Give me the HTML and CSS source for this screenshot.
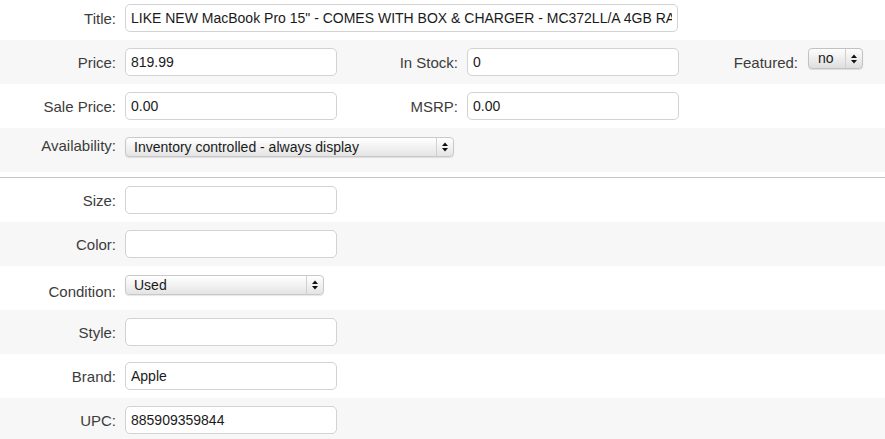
FILE: index.html
```html
<!DOCTYPE html>
<html lang="en">
<head>
<meta charset="UTF-8">
<title>Edit Product</title>
<link rel="stylesheet" href="styles.css">
</head>
<body>
	<form class="product-form">
		<div class="row">
			<label class="lbl">Title:</label>
			<input class="txt wide" type="text" value="LIKE NEW MacBook Pro 15&quot; - COMES WITH BOX &amp; CHARGER - MC372LL/A 4GB RAM 320GB HDD">
		</div>
		<div class="row alt">
			<label class="lbl">Price:</label>
			<input class="txt" type="text" value="819.99">
			<label class="lbl lbl2">In Stock:</label>
			<input class="txt" type="text" value="0">
			<label class="lbl lbl3">Featured:</label>
			<div class="select small"><span class="val">no</span><span class="arrows"><svg width="6" height="10" viewBox="0 0 6 10"><path d="M3 0.5L6 4H0z M0 6h6L3 9.5z" fill="#111"/></svg></span></div>
		</div>
		<div class="row">
			<label class="lbl">Sale Price:</label>
			<input class="txt" type="text" value="0.00">
			<label class="lbl lbl2">MSRP:</label>
			<input class="txt" type="text" value="0.00">
		</div>
		<div class="row alt">
			<label class="lbl up">Availability:</label>
			<div class="select long"><span class="val">Inventory controlled - always display</span><span class="arrows"><svg width="6" height="10" viewBox="0 0 6 10"><path d="M3 0.5L6 4H0z M0 6h6L3 9.5z" fill="#111"/></svg></span></div>
		</div>

		<hr class="sep">

		<div class="row">
			<label class="lbl">Size:</label>
			<input class="txt" type="text" value="">
		</div>
		<div class="row alt">
			<label class="lbl">Color:</label>
			<input class="txt" type="text" value="">
		</div>
		<div class="row">
			<label class="lbl down">Condition:</label>
			<div class="select mid"><span class="val">Used</span><span class="arrows"><svg width="6" height="10" viewBox="0 0 6 10"><path d="M3 0.5L6 4H0z M0 6h6L3 9.5z" fill="#111"/></svg></span></div>
		</div>
		<div class="row alt">
			<label class="lbl">Style:</label>
			<input class="txt" type="text" value="">
		</div>
		<div class="row">
			<label class="lbl">Brand:</label>
			<input class="txt" type="text" value="Apple">
		</div>
		<div class="row alt">
			<label class="lbl">UPC:</label>
			<input class="txt" type="text" value="885909359844">
		</div>
	</form>
</body>
</html>
```

FILE: styles.css
```css
*{margin: 0;padding: 0;box-sizing: border-box;}
body{
	background: #fff;
	font: 14px "Liberation Sans", Arial, Helvetica, sans-serif;
	color: #333;
	overflow: hidden;
}
.product-form{margin-top: -4px;}
.row{
	display: flex;
	align-items: center;
	height: 44px;
}
.row.alt{background: #f7f7f7;}
.lbl{
	width: 116px;
	margin-right: 9px;
	text-align: right;
	font-size: 15px;
	line-height: 18px;
	color: #3c3c3c;
	padding-top: 2px;
}
/* select rows: labels sit a little off centre */
.lbl.up{padding-top: 0;margin-bottom: 8px;}
.lbl.down{padding-top: 8px;}
.lbl2{width: 121px;}
.lbl3{width: 119px;margin-right: 10px;}
.txt{
	width: 212px;
	height: 28px;
	border: 1px solid #d2d2d2;
	border-radius: 5px;
	background: #fff;
	padding: 0 5px;
	font: 14px "Liberation Sans", Arial, Helvetica, sans-serif;
	color: #1a1a1a;
	outline: none;
}
.txt.wide{width: 553px;}
.select{
	display: flex;
	align-self: flex-start;
	margin-top: 9px;
	height: 20px;
	line-height: 19px;
	border: 1px solid #c9c9c9;
	border-radius: 4px;
	background: linear-gradient(#ffffff, #f3f3f3 45%, #e4e4e4);
	box-shadow: 0 1px 1px rgba(0,0,0,0.1);
	color: #1a1a1a;
}
.select .val{
	flex: 1;
	padding-left: 8px;
	white-space: nowrap;
	overflow: hidden;
}
.select .arrows{
	width: 17px;
	border-left: 1px solid #d0d0d0;
	display: flex;
	align-items: center;
	justify-content: center;
}
.select.long{width: 329px;}
.select.mid{width: 199px;}
.select.small{
	width: 55px;
	margin-top: 8px;
	height: 21px;
	border-color: #c2c2c2;
	background: linear-gradient(#fdfdfd, #eeeeee 50%, #dedede);
}
.select.small .val{padding-left: 9px;}
.sep{
	border: 0;
	border-top: 1px solid #c4c4c4;
	margin-top: 5px;
}
```
